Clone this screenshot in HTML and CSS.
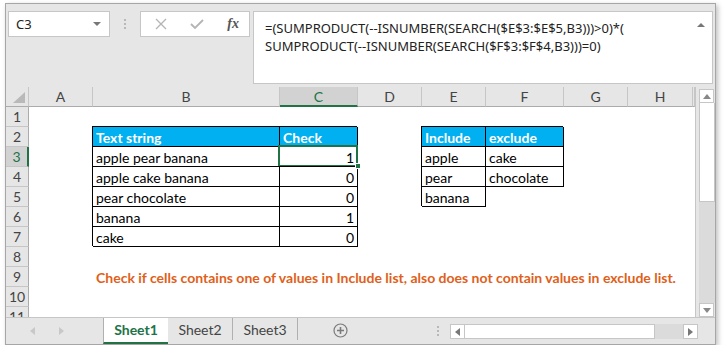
FILE: index.html
```html
<!DOCTYPE html>
<html lang="en">
  <head>
    <meta charset="UTF-8" />
    <meta name="viewport" content="width=device-width, initial-scale=1.0" />
    <title>Book1 - Excel</title>
    <link rel="stylesheet" href="styles.css">
  </head>
  <body>
    <div class="window">
      <div class="formula-bar">
        <div class="name-box">
          <span>C3</span>
          <span class="drop"></span>
        </div>
        <div class="grip"><i></i><i></i><i></i></div>
        <div class="fx-buttons">
          <svg width="12" height="12" viewBox="0 0 12 12"><path d="M1 1 L11 11 M11 1 L1 11" stroke="#b4b4b4" stroke-width="1.3" fill="none" /></svg>
          <svg width="14" height="12" viewBox="0 0 14 12"><path d="M1 6 L5 10 L13 2" stroke="#b4b4b4" stroke-width="1.8" fill="none" /></svg>
          <span class="fx">fx</span>
        </div>
        <div class="formula">
          <div>=(SUMPRODUCT(--ISNUMBER(SEARCH($E$3:$E$5,B3)))&gt;0)*(</div>
          <div>SUMPRODUCT(--ISNUMBER(SEARCH($F$3:$F$4,B3)))=0)</div>
          <svg class="caret" width="8" height="5" viewBox="0 0 8 5"><path d="M0 5 L4 1 L8 5 Z" fill="#777" /></svg>
        </div>
      </div>

      <div class="main">
        <div class="sheet">
          <div class="hdr corner"><span class="tri"></span></div>
          <div class="hdr">A</div>
          <div class="hdr">B</div>
          <div class="hdr active-col">C</div>
          <div class="hdr">D</div>
          <div class="hdr">E</div>
          <div class="hdr">F</div>
          <div class="hdr">G</div>
          <div class="hdr">H</div>
          <div class="hdr"></div>

          <div class="rh">1</div>
          <div class="c"></div><div class="c"></div><div class="c"></div><div class="c"></div>
          <div class="c"></div><div class="c"></div><div class="c"></div><div class="c"></div><div class="c"></div>

          <div class="rh">2</div>
          <div class="c"></div>
          <div class="c t th">Text string</div>
          <div class="c t th">Check</div>
          <div class="c"></div>
          <div class="c t th">Include</div>
          <div class="c t th">exclude</div>
          <div class="c"></div><div class="c"></div><div class="c"></div>

          <div class="rh active-row">3</div>
          <div class="c"></div>
          <div class="c t">apple pear banana</div>
          <div class="c t num sel">1<span class="handle"></span></div>
          <div class="c"></div>
          <div class="c t">apple</div>
          <div class="c t">cake</div>
          <div class="c"></div><div class="c"></div><div class="c"></div>

          <div class="rh">4</div>
          <div class="c"></div>
          <div class="c t">apple cake banana</div>
          <div class="c t num">0</div>
          <div class="c"></div>
          <div class="c t">pear</div>
          <div class="c t">chocolate</div>
          <div class="c"></div><div class="c"></div><div class="c"></div>

          <div class="rh">5</div>
          <div class="c"></div>
          <div class="c t">pear chocolate</div>
          <div class="c t num">0</div>
          <div class="c"></div>
          <div class="c t">banana</div>
          <div class="c"></div><div class="c"></div><div class="c"></div><div class="c"></div>

          <div class="rh">6</div>
          <div class="c"></div>
          <div class="c t">banana</div>
          <div class="c t num">1</div>
          <div class="c"></div><div class="c"></div><div class="c"></div><div class="c"></div><div class="c"></div><div class="c"></div>

          <div class="rh">7</div>
          <div class="c"></div>
          <div class="c t">cake</div>
          <div class="c t num">0</div>
          <div class="c"></div><div class="c"></div><div class="c"></div><div class="c"></div><div class="c"></div><div class="c"></div>

          <div class="rh">8</div>
          <div class="c"></div><div class="c"></div><div class="c"></div><div class="c"></div>
          <div class="c"></div><div class="c"></div><div class="c"></div><div class="c"></div><div class="c"></div>

          <div class="rh">9</div>
          <div class="c"></div>
          <div class="c note">Check if cells contains one of values in Include list, also does not contain values in exclude list.</div>
          <div class="c"></div><div class="c"></div><div class="c"></div><div class="c"></div><div class="c"></div><div class="c"></div><div class="c"></div>

          <div class="rh">10</div>
          <div class="c"></div><div class="c"></div><div class="c"></div><div class="c"></div>
          <div class="c"></div><div class="c"></div><div class="c"></div><div class="c"></div><div class="c"></div>

          <div class="rh">11</div>
          <div class="c"></div><div class="c"></div><div class="c"></div><div class="c"></div>
          <div class="c"></div><div class="c"></div><div class="c"></div><div class="c"></div><div class="c"></div>
        </div>

        <div class="vscroll">
          <div class="sbtn"><svg width="8" height="5" viewBox="0 0 8 5"><path d="M0 5 L4 0 L8 5 Z" fill="#888" /></svg></div>
          <div class="vthumb"></div>
          <div class="vtrack"></div>
          <div class="sbtn"><svg width="8" height="5" viewBox="0 0 8 5"><path d="M0 0 L4 5 L8 0 Z" fill="#888" /></svg></div>
        </div>
      </div>

      <div class="tabbar">
        <div class="nav">
          <svg width="5" height="8" viewBox="0 0 5 8"><path d="M5 0 L0 4 L5 8 Z" fill="#c8c8c8" /></svg>
          <svg width="5" height="8" viewBox="0 0 5 8"><path d="M0 0 L5 4 L0 8 Z" fill="#c8c8c8" /></svg>
        </div>
        <div class="tab active">Sheet1</div>
        <div class="tab">Sheet2</div>
        <div class="tab">Sheet3</div>
        <div class="add">
          <svg width="15" height="15" viewBox="0 0 15 15">
            <circle cx="7.5" cy="7.5" r="6.5" stroke="#7a7a7a" stroke-width="1.2" fill="none" />
            <path d="M7.5 4 V11 M4 7.5 H11" stroke="#7a7a7a" stroke-width="1.6" />
          </svg>
        </div>
        <div class="grip tab-grip"><i></i><i></i><i></i></div>
        <div class="hscroll">
          <div class="sbtn"><svg width="5" height="8" viewBox="0 0 5 8"><path d="M5 0 L0 4 L5 8 Z" fill="#777" /></svg></div>
          <div class="hthumb"></div>
          <div class="htrack"></div>
          <div class="sbtn"><svg width="5" height="8" viewBox="0 0 5 8"><path d="M0 0 L5 4 L0 8 Z" fill="#777" /></svg></div>
        </div>
      </div>
    </div>
  </body>
</html>
```

FILE: styles.css
```css
* {
  box-sizing: border-box;
}
body {
  margin: 0;
  background: #fff;
  font-family: "Lato", "Liberation Sans", sans-serif;
}
.window {
  margin: 3px 0 0 5px;
  width: 711px;
  height: 342px;
  border: 1px solid #a6a6a6;
  background: #e6e6e6;
  box-shadow: 2px 2px 5px rgba(0, 0, 0, 0.25);
  overflow: hidden;
}

/* formula bar */
.formula-bar {
  height: 83px;
  display: flex;
  align-items: flex-start;
  padding: 7px 0 0 2px;
}
.name-box {
  width: 102px;
  height: 26px;
  background: #fff;
  border: 1px solid #c6c6c6;
  display: flex;
  align-items: center;
  justify-content: space-between;
  padding: 0 8px 0 7px;
  font-family: "Noto Sans", "Open Sans", sans-serif;
  font-size: 13px;
  color: #222;
}
.drop {
  width: 0;
  height: 0;
  border-left: 4px solid transparent;
  border-right: 4px solid transparent;
  border-top: 4px solid #777;
}
.grip {
  width: 30px;
  height: 26px;
  display: flex;
  flex-direction: column;
  align-items: center;
  justify-content: center;
  gap: 2px;
}
.grip i {
  width: 2px;
  height: 2px;
  background: #b8b8b8;
}
.fx-buttons {
  width: 110px;
  height: 26px;
  background: #fff;
  border: 1px solid #c6c6c6;
  display: flex;
  align-items: center;
  justify-content: space-between;
  padding: 0 10px 0 14px;
}
.fx {
  font-family: "Liberation Serif", serif;
  font-style: italic;
  font-weight: bold;
  font-size: 14px;
  color: #555;
}
.formula {
  position: relative;
  margin-left: 3px;
  width: 460px;
  height: 73px;
  background: #fff;
  border: 1px solid #c6c6c6;
  padding: 7px 0 0 11px;
  font-family: "Noto Sans", "Open Sans", sans-serif;
  font-size: 13px;
  line-height: 18px;
  color: #222;
}
.caret {
  position: absolute;
  right: 7px;
  top: 10px;
}

/* grid */
.main {
  display: flex;
  height: 230px;
}
.sheet {
  width: 690px;
  display: grid;
  grid-template-columns: 23px 64px 187px 78px 64px 64px 78px 64px 65px 2px;
  grid-template-rows: 20px repeat(11, 20px);
  background: #fff;
  border-right: 1px solid #c6c6c6;
  overflow: hidden;
  font-size: 14px;
  color: #000;
}
.hdr {
  background: #e6e6e6;
  border-right: 1px solid #c6c6c6;
  border-bottom: 1px solid #ababab;
  text-align: center;
  font-size: 14px;
  line-height: 20px;
  color: #444;
}
.corner {
  position: relative;
}
.tri {
  position: absolute;
  right: 3px;
  bottom: 3px;
  width: 0;
  height: 0;
  border-left: 12px solid transparent;
  border-bottom: 11px solid #b9b9b9;
}
.active-col {
  background: #d2d2d2;
  color: #217346;
  border-bottom: 2px solid #217346;
}
.rh {
  background: #e6e6e6;
  border-right: 1px solid #ababab;
  border-bottom: 1px solid #c6c6c6;
  text-align: center;
  font-size: 14px;
  line-height: 20px;
  color: #444;
}
.active-row {
  background: #d2d2d2;
  color: #217346;
  border-right: 2px solid #217346;
}
.c {
  position: relative;
  padding: 0 3px;
  line-height: 21px;
  white-space: nowrap;
}
.t {
  border-right: 1px solid #000;
  border-bottom: 1px solid #000;
  box-shadow: -1px -1px 0 #000;
}
.th {
  background: #00b0f0;
  color: #fff;
  font-weight: bold;
}
.num {
  text-align: right;
}
.sel::before {
  content: "";
  position: absolute;
  top: -2px;
  right: -1px;
  bottom: -1px;
  left: -2px;
  border: 2px solid #217346;
}
.handle {
  position: absolute;
  right: -4px;
  bottom: -3px;
  width: 6px;
  height: 6px;
  background: #217346;
  border: 1px solid #fff;
  z-index: 1;
}
.note {
  overflow: visible;
  font-weight: bold;
  font-size: 14px;
  color: #e0601a;
  z-index: 1;
}

/* scrollbars */
.vscroll {
  width: 19px;
  display: flex;
  flex-direction: column;
  padding: 2px 0 0 3px;
}
.sbtn {
  width: 15px;
  height: 14px;
  background: #fff;
  border: 1px solid #c6c6c6;
  display: flex;
  align-items: center;
  justify-content: center;
  flex-shrink: 0;
}
.vthumb {
  height: 99px;
  background: #fff;
  border: 1px solid #c6c6c6;
  border-top: 0;
}
.vtrack {
  flex: 1;
  background: #dbdbdb;
}

/* sheet tabs */
.tabbar {
  height: 27px;
  border-top: 1px solid #c6c6c6;
  display: flex;
  align-items: stretch;
}
.nav {
  width: 97px;
  display: flex;
  align-items: center;
  gap: 24px;
  padding-left: 24px;
}
.tab {
  width: 65px;
  display: flex;
  align-items: center;
  justify-content: center;
  border-right: 1px solid #b0b0b0;
  margin: 0 0 4px;
  font-size: 14px;
  color: #444;
}
.tab.active {
  margin: 0;
  background: #fff;
  border-left: 1px solid #b0b0b0;
  border-right: 0;
  border-bottom: 2px solid #217346;
  color: #217346;
  font-weight: bold;
  padding-bottom: 2px;
}
.add {
  width: 84px;
  display: flex;
  align-items: center;
  justify-content: center;
  padding-bottom: 1px;
}
.tab-grip {
  width: 16px;
  height: 26px;
  margin-left: 48px;
}
.hscroll {
  display: flex;
  align-items: flex-start;
  margin: 6px 0 0 4px;
}
.hscroll .sbtn {
  width: 15px;
  height: 15px;
}
.hthumb {
  width: 190px;
  height: 15px;
  background: #fff;
  border: 1px solid #c6c6c6;
  border-left: 0;
}
.htrack {
  width: 28px;
  height: 15px;
  background: #dbdbdb;
}
```
